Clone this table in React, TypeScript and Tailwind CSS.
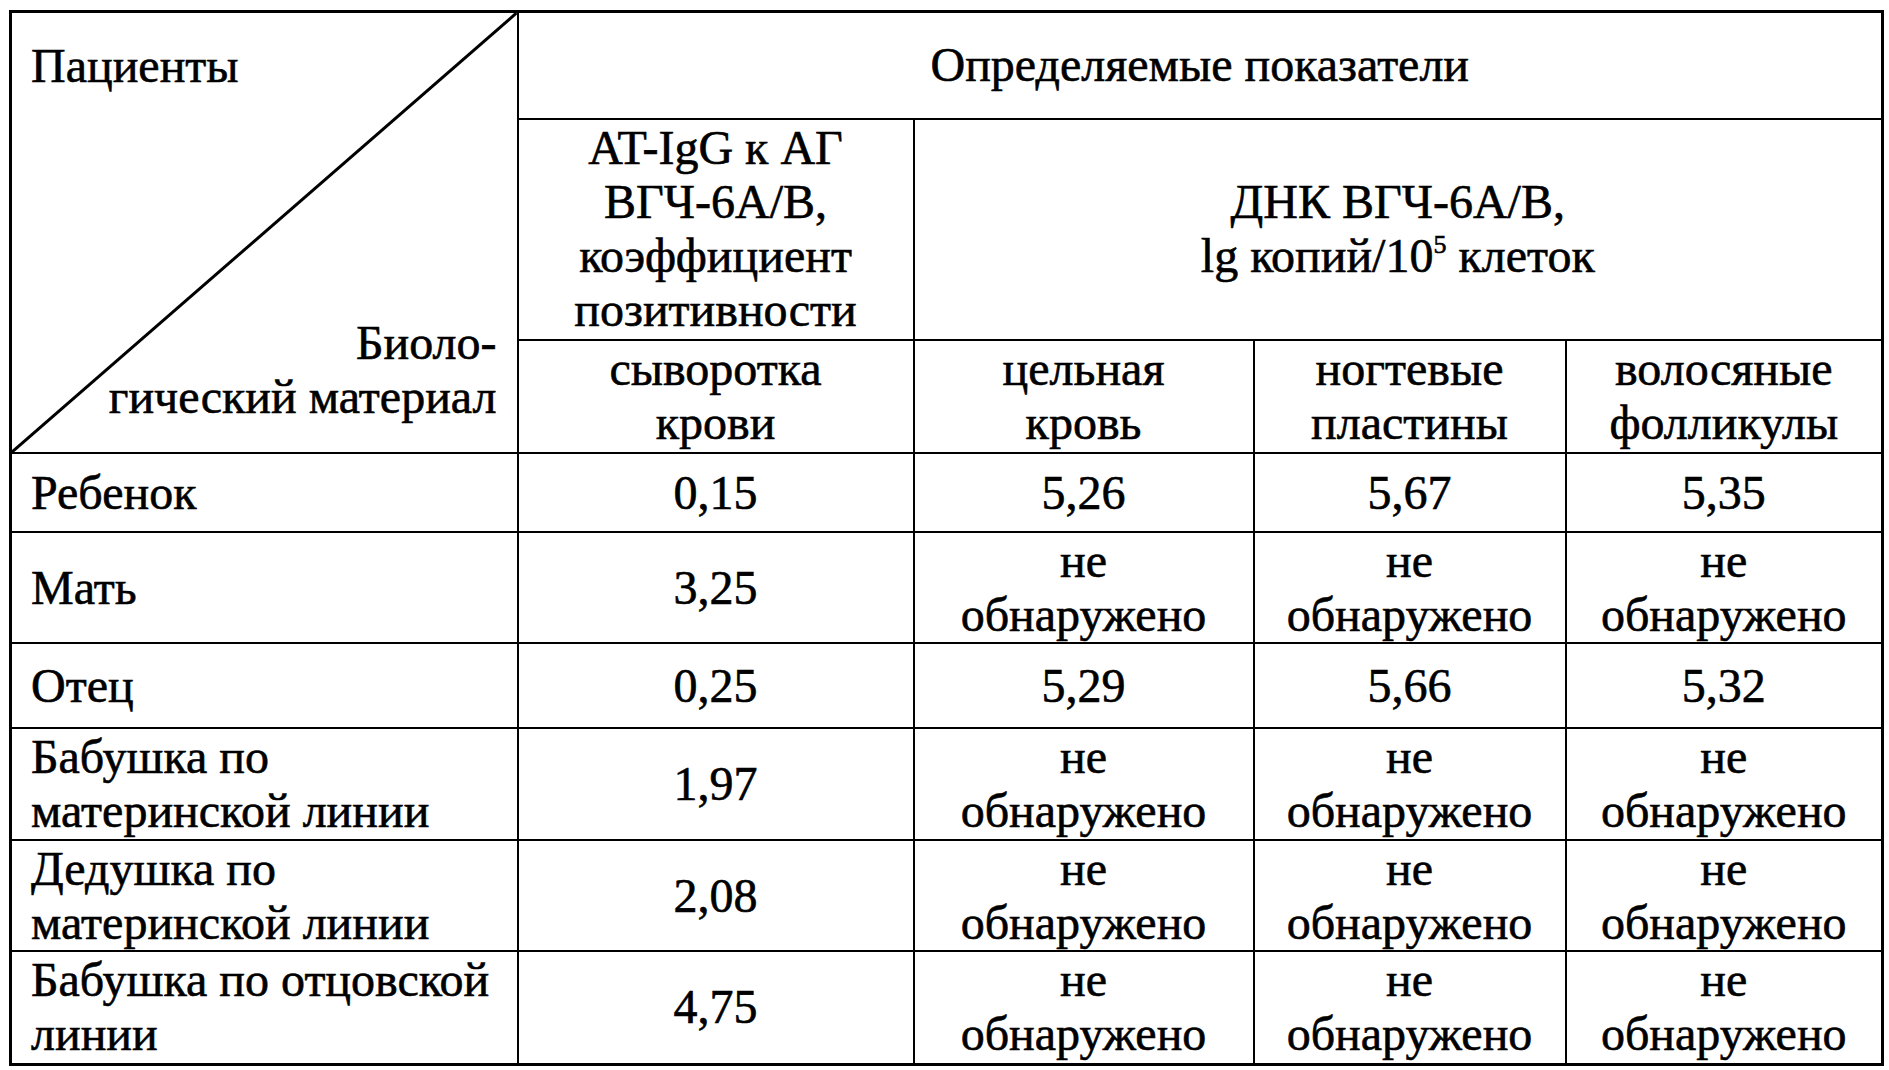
import React from "react";

type Row = {
  name: React.ReactNode;
  serum: string;
  blood: string;
  nails: string;
  hair: string;
  h: string;
};

const NF = (
  <>
    не
    <br />
    обнаружено
  </>
);

const rows: Row[] = [
  { name: "Ребенок", serum: "0,15", blood: "5,26", nails: "5,67", hair: "5,35", h: "h-[79px]" },
  { name: "Мать", serum: "3,25", blood: "nf", nails: "nf", hair: "nf", h: "h-[111px]" },
  { name: "Отец", serum: "0,25", blood: "5,29", nails: "5,66", hair: "5,32", h: "h-[85px]" },
  {
    name: (
      <>
        Бабушка по
        <br />
        материнской линии
      </>
    ),
    serum: "1,97",
    blood: "nf",
    nails: "nf",
    hair: "nf",
    h: "h-[112px]",
  },
  {
    name: (
      <>
        Дедушка по
        <br />
        материнской линии
      </>
    ),
    serum: "2,08",
    blood: "nf",
    nails: "nf",
    hair: "nf",
    h: "h-[111px]",
  },
  {
    name: (
      <>
        Бабушка по отцовской
        <br />
        линии
      </>
    ),
    serum: "4,75",
    blood: "nf",
    nails: "nf",
    hair: "nf",
    h: "h-[113px]",
  },
];

const cell = "border-2 border-black text-center align-middle p-0";

const val = (v: string) => (v === "nf" ? NF : v);

const App: React.FC = () => {
  return (
    <div className="min-h-screen bg-white pt-[10px] pl-[9px] text-black font-['Liberation_Serif',serif] text-[48px] leading-[54px] [-webkit-text-stroke:0.6px_black]">
      <table className="table-fixed border-collapse border-[3px] border-black w-[1872px]">
        <colgroup>
          <col className="w-[507px]" />
          <col className="w-[396px]" />
          <col className="w-[340px]" />
          <col className="w-[312px]" />
          <col className="w-[317px]" />
        </colgroup>
        <tbody>
          <tr className="h-[107px]">
            <td rowSpan={3} className="border-2 border-black p-0 align-top">
              <div className="relative h-[439px] flex flex-col justify-between pt-[26px] pb-[28px] pl-[19px] pr-[20px]">
                <svg
                  className="absolute inset-0 w-full h-full"
                  viewBox="0 0 100 100"
                  preserveAspectRatio="none"
                >
                  <line
                    x1="0"
                    y1="100"
                    x2="100"
                    y2="0"
                    stroke="black"
                    strokeWidth="3"
                    vectorEffect="non-scaling-stroke"
                  />
                </svg>
                <div className="relative">Пациенты</div>
                <div className="relative text-right">
                  Биоло-
                  <br />
                  гический материал
                </div>
              </div>
            </td>
            <td colSpan={4} className={cell}>
              Определяемые показатели
            </td>
          </tr>
          <tr className="h-[221px]">
            <td className={cell}>
              AT-IgG к АГ
              <br />
              ВГЧ-6А/В,
              <br />
              коэффициент
              <br />
              позитивности
            </td>
            <td colSpan={3} className={cell}>
              ДНК ВГЧ-6А/В,
              <br />
              lg копий/10<sup className="text-[26px] -top-[0.75em]">5</sup> клеток
            </td>
          </tr>
          <tr className="h-[113px]">
            <td className={cell}>
              сыворотка
              <br />
              крови
            </td>
            <td className={cell}>
              цельная
              <br />
              кровь
            </td>
            <td className={cell}>
              ногтевые
              <br />
              пластины
            </td>
            <td className={cell}>
              волосяные
              <br />
              фолликулы
            </td>
          </tr>
          {rows.map((r, i) => (
            <tr key={i} className={r.h}>
              <td className="border-2 border-black align-middle text-left pl-[19px] pr-2 py-0">
                {r.name}
              </td>
              <td className={cell}>{r.serum}</td>
              <td className={cell}>{val(r.blood)}</td>
              <td className={cell}>{val(r.nails)}</td>
              <td className={cell}>{val(r.hair)}</td>
            </tr>
          ))}
        </tbody>
      </table>
    </div>
  );
};

export default App;
